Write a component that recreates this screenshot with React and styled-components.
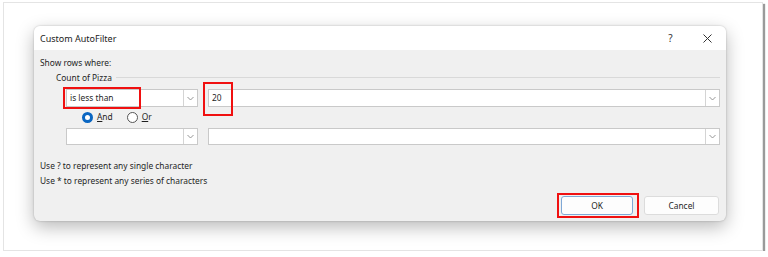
import React from "react";
import styled, { createGlobalStyle } from "styled-components";

const GlobalStyle = createGlobalStyle`
  html, body {
    margin: 0;
    padding: 0;
    background: #ffffff;
  }
  body {
    font-family: "Noto Sans", "Open Sans", sans-serif;
    color: #1f1f1f;
  }
`;

const Frame = styled.div`
  box-sizing: border-box;
  margin: 2px 0 0 3px;
  width: 760px;
  height: 249px;
  background: #ffffff;
  border: 1px solid #e4e4e4;
  box-shadow: 2px 2px 1px #9a9a9a;
  padding: 23px 0 0 30px;
`;

const Dialog = styled.div`
  width: 692px;
  height: 195px;
  background: #f0f0f0;
  border-radius: 6px;
  box-shadow: 0 6px 18px rgba(0, 0, 0, 0.28), 0 0 2px rgba(0, 0, 0, 0.25);
  display: flex;
  flex-direction: column;
  overflow: hidden;
`;

const TitleBar = styled.div`
  height: 24px;
  background: #ffffff;
  display: flex;
  align-items: center;
  padding-left: 6px;
  font-size: 9px;
  color: #222;
`;

const TitleText = styled.span`
  flex: 1;
`;

const TitleButton = styled.span`
  width: 37px;
  display: flex;
  justify-content: center;
  font-size: 10px;
  color: #333;
`;

const Body = styled.div`
  flex: 1;
  display: flex;
  flex-direction: column;
  padding: 7px 6px 6px 6px;
  font-size: 8.4px;
  line-height: 12px;
`;

const Label = styled.div`
  margin-top: ${(p) => p.$top || 0}px;
  padding-left: ${(p) => p.$indent || 0}px;
`;

const Legend = styled.div`
  margin-top: 3px;
  padding-left: 16px;
  display: flex;
  align-items: center;
  gap: 4px;
  &::after {
    content: "";
    flex: 1;
    height: 1px;
    background: #d9d9d9;
    margin-top: -1px;
  }
`;

const FieldRow = styled.div`
  margin-top: ${(p) => p.$top}px;
  padding-left: 26px;
  display: flex;
  gap: 10px;
  height: ${(p) => p.$h}px;
`;

const Combo = styled.div`
  position: relative;
  box-sizing: border-box;
  width: ${(p) => p.$w}px;
  flex: ${(p) => (p.$grow ? 1 : "none")};
  height: 100%;
  background: #ffffff;
  border: 1px solid #c9c9c9;
  display: flex;
  align-items: center;
`;

const ComboText = styled.span`
  flex: 1;
  padding-left: 3px;
`;

const Arrow = styled.span`
  width: 13px;
  height: 100%;
  border-left: 1px solid #d4d4d4;
  display: flex;
  align-items: center;
  justify-content: center;
`;

const Highlight = styled.div`
  position: absolute;
  border: 2px solid #f01010;
  box-sizing: border-box;
  top: ${(p) => p.$top}px;
  left: ${(p) => p.$left}px;
  width: ${(p) => p.$w}px;
  height: ${(p) => p.$h}px;
  pointer-events: none;
`;

const RadioRow = styled.div`
  margin-top: 4px;
  padding-left: 42px;
  display: flex;
  align-items: center;
  gap: 14px;
`;

const RadioItem = styled.label`
  display: flex;
  align-items: center;
  gap: 4px;
`;

const RadioDot = styled.span`
  box-sizing: border-box;
  width: 11px;
  height: 11px;
  border-radius: 50%;
  border: ${(p) => (p.$on ? "3px solid #0a66c2" : "1px solid #555")};
  background: #ffffff;
`;

const ButtonRow = styled.div`
  margin-top: auto;
  display: flex;
  justify-content: flex-end;
  gap: 11px;
  padding-right: 1px;
`;

const Button = styled.div`
  position: relative;
  box-sizing: border-box;
  width: ${(p) => p.$w}px;
  height: 19px;
  background: #fdfdfd;
  border: 1px solid ${(p) => (p.$primary ? "#7fa8d6" : "#dcdcdc")};
  border-radius: 3px;
  display: flex;
  align-items: center;
  justify-content: center;
`;

const Chevron = () => (
  <svg width="7" height="5" viewBox="0 0 7 5">
    <path d="M0.5 1 L3.5 4 L6.5 1" fill="none" stroke="#8a8a8a" strokeWidth="0.9" />
  </svg>
);

const CloseIcon = () => (
  <svg width="9" height="9" viewBox="0 0 9 9">
    <path d="M0.5 0.5 L8.5 8.5 M8.5 0.5 L0.5 8.5" stroke="#333" strokeWidth="1" />
  </svg>
);

export default function App() {
  return (
    <>
      <GlobalStyle />
      <Frame>
        <Dialog>
          <TitleBar>
            <TitleText>Custom AutoFilter</TitleText>
            <TitleButton>?</TitleButton>
            <TitleButton>
              <CloseIcon />
            </TitleButton>
          </TitleBar>
          <Body>
            <Label>Show rows where:</Label>
            <Legend>Count of Pizza</Legend>
            <FieldRow $top={5} $h={18}>
              <Combo $w={132}>
                <ComboText>is less than</ComboText>
                <Arrow>
                  <Chevron />
                </Arrow>
                <Highlight $top={-3} $left={-4} $w={78} $h={22} />
              </Combo>
              <Combo $grow>
                <ComboText>20</ComboText>
                <Arrow>
                  <Chevron />
                </Arrow>
                <Highlight $top={-8} $left={-6} $w={30} $h={34} />
              </Combo>
            </FieldRow>
            <RadioRow>
              <RadioItem>
                <RadioDot $on />
                <span>
                  <u>A</u>nd
                </span>
              </RadioItem>
              <RadioItem>
                <RadioDot />
                <span>
                  <u>O</u>r
                </span>
              </RadioItem>
            </RadioRow>
            <FieldRow $top={5} $h={17}>
              <Combo $w={132}>
                <ComboText />
                <Arrow>
                  <Chevron />
                </Arrow>
              </Combo>
              <Combo $grow>
                <ComboText />
                <Arrow>
                  <Chevron />
                </Arrow>
              </Combo>
            </FieldRow>
            <Label $top={15}>Use ? to represent any single character</Label>
            <Label $top={3}>Use * to represent any series of characters</Label>
            <ButtonRow>
              <Button $w={72} $primary>
                OK
                <Highlight $top={-4} $left={-5} $w={82} $h={25} />
              </Button>
              <Button $w={75}>Cancel</Button>
            </ButtonRow>
          </Body>
        </Dialog>
      </Frame>
    </>
  );
}
